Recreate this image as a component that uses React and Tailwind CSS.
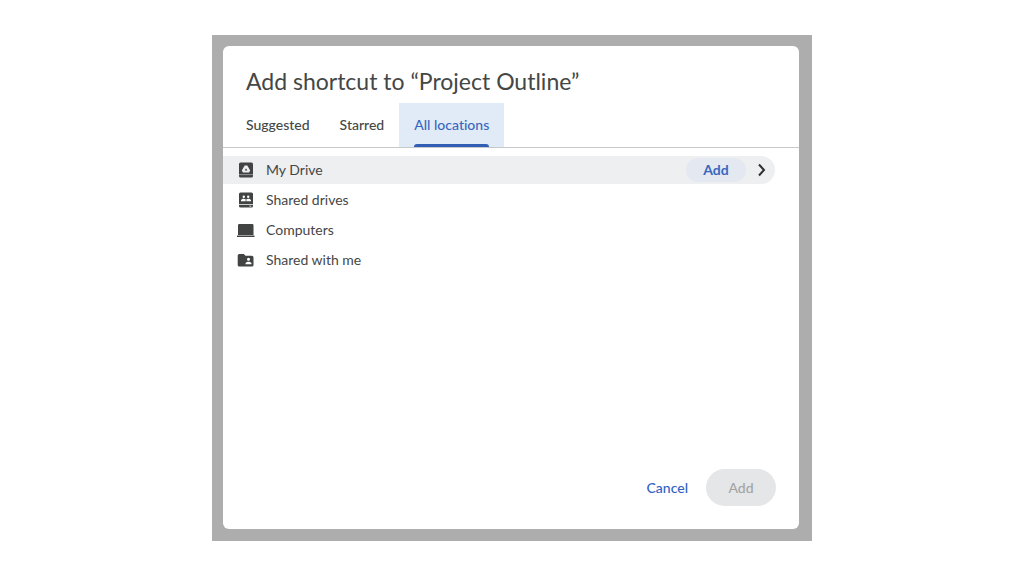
const iconClass = "h-4 w-5 shrink-0 text-[#414443]";

function DriveIcon() {
  return (
    <svg viewBox="0 0 20 16" className={iconClass} aria-hidden="true">
      <path fill="currentColor" d="M4.500.5h11A1.500 1.500 0 0 1 17 2v12a1.500 1.500 0 0 1-1.500 1.500h-11A1.500 1.500 0 0 1 3 14V2A1.500 1.500 0 0 1 4.500.5Z" />
      <path fill="#eeeff1" d="M8.700 3.500h2.600l2.900 4.900-1.200 2.200H7L5.800 8.400Z" />
      <path fill="#9a9c9d" d="M3 12.200h14v.9H3z" />
      <path fill="currentColor" d="M10 6.200 11.300 8.500H8.700Z" />
    </svg>
  );
}

function SharedDrivesIcon() {
  return (
    <svg viewBox="0 0 20 16" className={iconClass} aria-hidden="true">
      <path fill="currentColor" d="M4.500.5h11A1.500 1.500 0 0 1 17 2v10.200H3V2A1.500 1.500 0 0 1 4.500.5ZM3 13h14v1a1.500 1.500 0 0 1-1.500 1.500h-11A1.500 1.500 0 0 1 3 14Z" />
      <g fill="#fff">
        <circle cx="7.800" cy="4.800" r="1.200" />
        <circle cx="12.200" cy="4.800" r="1.200" />
        <path d="M5 9.200v-.9c0-1.100 1.600-1.600 2.700-1.600.7 0 1.500.2 2 .6v1.900ZM10.400 9.200V7.300c.5-.4 1.300-.6 1.900-.6 1.100 0 2.700.5 2.700 1.600v.9ZM13.300 13.700h2v.9h-2z" />
      </g>
    </svg>
  );
}

function ComputerIcon() {
  return (
    <svg viewBox="0 0 20 16" className={iconClass} aria-hidden="true">
      <path fill="currentColor" d="M3.200 2h13.100a1.200 1.200 0 0 1 1.200 1.200V13H2V3.200A1.200 1.200 0 0 1 3.200 2ZM1 13.500h17.500V15H1z" />
    </svg>
  );
}

function SharedFolderIcon() {
  return (
    <svg viewBox="0 0 20 16" className={iconClass} aria-hidden="true">
      <path fill="currentColor" d="M3.300 2h4.500l1.700 1.800h6.400a1.600 1.600 0 0 1 1.600 1.600v7.500a1.600 1.600 0 0 1-1.600 1.600H3.300a1.600 1.600 0 0 1-1.600-1.600V3.600A1.600 1.600 0 0 1 3.300 2Z" />
      <circle cx="12.500" cy="7.300" r="1.500" fill="#fff" />
      <path fill="#fff" d="M9.500 12.300v-.8c0-1.100 1.900-1.700 3-1.700s3 .6 3 1.700v.8Z" />
    </svg>
  );
}

const tabs = ["Suggested", "Starred", "All locations"];
const places = [
  { name: "Shared drives", Icon: SharedDrivesIcon },
  { name: "Computers", Icon: ComputerIcon },
  { name: "Shared with me", Icon: SharedFolderIcon },
];

export default function App() {
  return (
    <main className="flex min-h-screen items-center justify-center bg-white font-['Lato','Liberation_Sans',sans-serif] text-[#444746] [font-variant-ligatures:none]">
      <div className="w-full max-w-[600px] bg-[#adadad] pt-[11px] pr-[13px] pb-3 pl-[11px]">
        <section role="dialog" aria-labelledby="title" className="flex min-h-[483px] flex-col rounded-md bg-white">
          <h1 id="title" className="px-[23px] pt-[19px] text-[23px] leading-8">
            Add shortcut to “Project Outline”
          </h1>
          <div role="tablist" className="mt-[6px] flex border-b border-[#c7c8c9] px-2 text-sm font-medium">
            {tabs.map((tab) =>
              tab === "All locations" ? (
                <button key={tab} type="button" role="tab" aria-selected="true" className="flex h-11 flex-col items-center bg-[#e1ebf8] px-[15px] text-[#3767bd]">
                  <span className="flex flex-1 items-center">{tab}</span>
                  <span className="-mt-[3px] h-[3px] w-full rounded-t-sm bg-[#315eb5]" />
                </button>
              ) : (
                <button key={tab} type="button" role="tab" aria-selected="false" className="h-11 px-[15px]">
                  {tab}
                </button>
              ),
            )}
          </div>
          <ul className="mt-2 flex-1 text-sm">
            <li className="mr-6 flex h-7 items-center rounded-r-full bg-[#eeeff1] pl-[13px]">
              <DriveIcon />
              <span className="ml-[10px] flex-1">My Drive</span>
              <button type="button" className="h-6 w-[60px] rounded-full bg-[#e4e8f1] font-bold text-[#3767bd]">
                Add
              </button>
              <button type="button" aria-label="Open My Drive" className="flex h-7 w-[29px] items-center justify-center text-[#303030]">
                <svg viewBox="0 0 16 16" className="h-4 w-4" fill="none" stroke="currentColor" strokeWidth="2" aria-hidden="true">
                  <path d="m6 2.500 5 5.500-5 5.500" />
                </svg>
              </button>
            </li>
            {places.map(({ name, Icon }) => (
              <li key={name} className="mt-[2px] flex h-7 items-center pl-[13px]">
                <Icon />
                <span className="ml-[10px]">{name}</span>
              </li>
            ))}
          </ul>
          <footer className="flex items-center justify-end gap-2 pr-[23px] pb-[23px] pl-6 text-sm">
            <button type="button" className="h-9 px-[10px] font-medium text-[#3062c4]">
              Cancel
            </button>
            <button type="button" disabled className="h-[37px] w-[70px] rounded-full bg-[#e5e6e8] font-medium text-[#a2a4a4]">
              Add
            </button>
          </footer>
        </section>
      </div>
    </main>
  );
}
